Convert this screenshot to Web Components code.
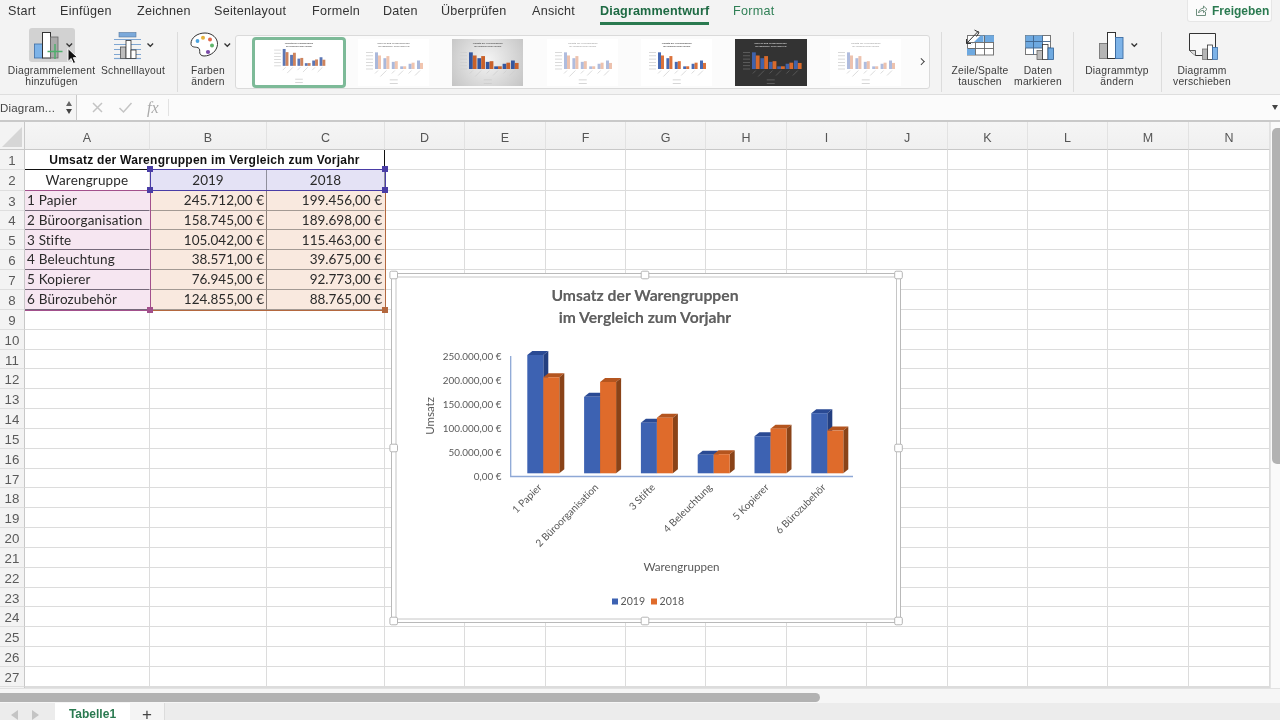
<!DOCTYPE html>
<html lang="de"><head><meta charset="utf-8"><title>Excel</title>
<style>html,body{margin:0;padding:0;width:1280px;height:720px;overflow:hidden;background:#f3f3f3}</style></head>
<body>
<x-app>
  <x-tabs slot="tabs"></x-tabs>
  <x-ribbon slot="ribbon">
    <x-rbtn w="87" ml="8" l1="Diagrammelement" l2="hinzufügen"><svg viewBox="8 26 87 38" width="87" height="38">
      <rect x="29" y="28" width="46" height="34" rx="3" fill="#d2d2d2"/>
      <rect x="34.5" y="44" width="8" height="14" fill="#7db3e8" stroke="#3d6ea5" stroke-width=".8"/>
      <rect x="42.5" y="32.5" width="8" height="25.500" fill="#fff" stroke="#333" stroke-width="1"/>
      <rect x="50.500" y="37" width="7.500" height="21" fill="#aaa" stroke="#666" stroke-width=".8"/>
      <path d="M55 44v15M47.500 51.500h15" stroke="#4fae6c" stroke-width="1.500" fill="none"/>
      <path d="M66.500 43.500l2.800 2.800 2.800-2.800" stroke="#333" stroke-width="1.300" fill="none"/>
    </svg></x-rbtn>
    <x-rbtn w="64" ml="6" l1="Schnelllayout"><svg viewBox="101 26 64 38" width="64" height="38">
      <rect x="119" y="32.500" width="17" height="4.500" fill="#7ba9da" stroke="#55789f" stroke-width=".6"/>
      <path d="M114 39.500h27M114 44.500h27M114 49.500h27M114 54.500h27" stroke="#7ea6d2" stroke-width="1"/>
      <path d="M114 58.500h27" stroke="#7ea6d2" stroke-width="1.200"/>
      <rect x="120.500" y="47" width="5.500" height="11.500" fill="#bdbdbd" stroke="#555" stroke-width=".8"/>
      <rect x="126" y="40.500" width="5" height="18" fill="#fff" stroke="#333" stroke-width=".8"/>
      <rect x="131" y="50" width="5" height="8.500" fill="#fff" stroke="#333" stroke-width=".8"/>
      <path d="M147.500 43.500l2.800 2.800 2.800-2.800" stroke="#333" stroke-width="1.300" fill="none"/>
    </svg></x-rbtn>
    <x-sep ml="12"></x-sep>
    <x-rbtn w="48" ml="6" l1="Farben" l2="ändern"><svg viewBox="184 26 48 38" width="48" height="38">
      <path d="M205 33c-8 0-14 5-14 10.500 0 3.500 3 3.500 5.500 3.800 2.500.3 3.500 1.800 3.200 4.200-.3 2.500 1.300 4.500 4.300 4.500 7 0 13-5 13.500-11.500C217.900 38 212 33 205 33z" fill="#fff" stroke="#333" stroke-width="1"/>
      <circle cx="197.500" cy="41" r="1.900" fill="#4aa3df"/><circle cx="203" cy="37.800" r="2" fill="#e6b23a"/><circle cx="210" cy="39.500" r="2" fill="#e2694b"/><circle cx="212" cy="45.500" r="2" fill="#5fb56b"/><circle cx="208" cy="52" r="2.100" fill="#7a4aa8"/>
      <path d="M224.500 43.500l2.800 2.800 2.800-2.800" stroke="#333" stroke-width="1.300" fill="none"/>
    </svg></x-rbtn>
    <x-gallery ml="3"></x-gallery>
    <x-sep ml="11"></x-sep>
    <x-rbtn w="56" ml="10" l1="Zeile/Spalte" l2="tauschen"><svg viewBox="952 26 56 38" width="56" height="38">
      <rect x="967.500" y="35.500" width="26" height="19.500" fill="#fff" stroke="#777" stroke-width="1"/>
      <path d="M967 55v-7h8v-6h9v-6.500h10v6.500h-10v0h-9v13z" fill="#6ea9e0"/>
      <rect x="984" y="35.500" width="9.500" height="6.500" fill="#6ea9e0"/>
      <rect x="967.500" y="48" width="8" height="7" fill="#6ea9e0"/>
      <path d="M967.500 48.500l7-6.500h9v-6.500h-3" fill="#6ea9e0"/>
      <path d="M967.500 48.500h26M967.500 42.500h26M975.500 42.500v12.500M984.500 35.500v19.500" stroke="#666" stroke-width=".9"/>
      <path d="M966.500 39v4.500h4.500M966.500 43.500l12-12.500M974.500 30l4.500 2.500-2.500 4" stroke="#333" stroke-width="1" fill="none"/>
    </svg></x-rbtn>
    <x-rbtn w="50" ml="5" l1="Daten" l2="markieren"><svg viewBox="1013 26 50 38" width="50" height="38">
      <rect x="1025.500" y="35.500" width="25" height="19" fill="#fff" stroke="#777" stroke-width="1"/>
      <rect x="1025.500" y="35.500" width="17" height="12.500" fill="#6ea9e0"/>
      <path d="M1025.500 41.500h25M1025.500 48h25M1033.500 35.500v19M1042.500 35.500v19" stroke="#3f648c" stroke-width=".9"/>
      <rect x="1037" y="50.500" width="5.500" height="9" fill="#bbb" stroke="#666" stroke-width=".8"/>
      <rect x="1042.500" y="44.500" width="5.500" height="15" fill="#fff" stroke="#333" stroke-width=".8"/>
      <rect x="1048" y="48" width="5.500" height="11.500" fill="#6ea9e0" stroke="#2d5f95" stroke-width=".8"/>
    </svg></x-rbtn>
    <x-sep ml="10"></x-sep>
    <x-rbtn w="76" ml="5" l1="Diagrammtyp" l2="ändern"><svg viewBox="1080 26 76 38" width="76" height="38">
      <rect x="1100.500" y="43.500" width="8" height="15" fill="#b5b5b5" stroke="#777" stroke-width=".9"/>
      <rect x="1108.500" y="32.500" width="8" height="26" fill="#fff" stroke="#333" stroke-width="1"/>
      <rect x="1116.500" y="37.500" width="7.500" height="21" fill="#7db3e8" stroke="#3d6ea5" stroke-width=".9"/>
      <path d="M1132.500 43.500l2.800 2.800 2.800-2.800" stroke="#333" stroke-width="1.300" fill="none"/>
    </svg></x-rbtn>
    <x-sep ml="6"></x-sep>
    <x-rbtn w="70" ml="5" l1="Diagramm" l2="verschieben"><svg viewBox="1168 26 70 38" width="70" height="38">
      <path d="M1190.500 33.500h26v22h-20l-6-5z" fill="#f8f8f8" stroke="#333" stroke-width="1"/>
      <path d="M1190.500 50.500h6v5" fill="#ddd" stroke="#333" stroke-width=".8"/>
      <rect x="1203.500" y="49" width="5" height="10.500" fill="#b5b5b5" stroke="#777" stroke-width=".8"/>
      <rect x="1208.500" y="45" width="5" height="14.500" fill="#fff" stroke="#333" stroke-width=".8"/>
      <rect x="1213.500" y="47.500" width="5" height="12" fill="#7db3e8" stroke="#3d6ea5" stroke-width=".8"/>
    </svg></x-rbtn>
  </x-ribbon>
  <x-formula slot="formula"></x-formula>
  <x-sheet slot="sheet"></x-sheet>
  <x-vscroll slot="vscroll"></x-vscroll>
  <x-hscroll slot="hscroll"></x-hscroll>
  <x-sheettabs slot="sheettabs"></x-sheettabs>
</x-app>
<script>
const UI='"Liberation Sans",Arial,sans-serif', CAL='Lato,"Liberation Sans",sans-serif';
function def(name,html,setup){customElements.define(name,class extends HTMLElement{connectedCallback(){if(this.shadowRoot)return;const r=this.attachShadow({mode:'open'});r.innerHTML=typeof html==='function'?html(this):html;setup&&setup(r,this);}})}

def('x-app',`<style>
:host{display:block;width:1280px;height:720px;position:relative;overflow:hidden;background:#f3f3f3;filter:blur(.4px)}
.row{display:flex;height:566px}
svg{position:absolute;left:66px;top:47px}
</style>
<slot name="tabs"></slot><slot name="ribbon"></slot><slot name="formula"></slot>
<div class="row"><slot name="sheet"></slot><slot name="vscroll"></slot></div>
<slot name="hscroll"></slot><slot name="sheettabs"></slot>
<svg width="14" height="19" viewBox="0 0 14 19"><path d="M2 1.500v13l3.200-3 2.200 5 2.200-1-2.200-4.800h4.300z" fill="#111" stroke="#fff" stroke-width="1"/></svg>`);

def('x-tabs',`<style>
:host{display:flex;height:26px;position:relative;font:12.6px ${UI};color:#333;box-sizing:border-box}
span{position:absolute;top:4px;white-space:nowrap;letter-spacing:.25px}
.on{font-weight:bold;color:#1e6a43;letter-spacing:.15px}
.on::after{content:"";position:absolute;left:0;right:0;top:18px;height:2.500px;background:#2a7a50}
.fm{color:#2f7f55}
.share{position:absolute;left:1187px;top:0;width:85px;height:22px;box-sizing:border-box;background:#fbfbfb;border:1px solid #e6e6e6;border-top:0;border-radius:0 0 3px 3px;display:flex;align-items:center;gap:4px;padding-left:7px;color:#2a7a50;font-weight:bold;font-size:12px}
</style>
<span style="left:8px">Start</span><span style="left:60px">Einfügen</span><span style="left:137px">Zeichnen</span><span style="left:214px">Seitenlayout</span><span style="left:312px">Formeln</span><span style="left:383px">Daten</span><span style="left:441px">Überprüfen</span><span style="left:532px">Ansicht</span><span class="on" style="left:600px">Diagrammentwurf</span><span class="fm" style="left:733px">Format</span>
<div class="share"><svg width="13" height="13" viewBox="0 0 13 13" fill="none" stroke="#6e8f7e" stroke-width="1"><path d="M1.500 5v6.500h9V8"/><path d="M3.500 9c.3-3 2.500-4.800 5-4.800V2l3.500 3.300-3.500 3.300V6.400c-2 0-3.700.8-5 2.600z"/></svg>Freigeben</div>`);

def('x-ribbon',`<style>:host{display:flex;height:69px;box-sizing:border-box;border-bottom:1px solid #dedede;background:#f3f3f3;align-items:flex-start}</style><slot></slot>`);

def('x-rbtn',h=>`<style>
:host{display:flex;flex-direction:column;align-items:center;flex:none;width:${h.getAttribute('w')}px;margin-left:${h.getAttribute('ml')||0}px;font:10.3px/11.2px ${UI};color:#3c3c3c;letter-spacing:.22px;white-space:nowrap}
.i{height:38px;margin-bottom:1px}
</style><div class="i"><slot></slot></div><div>${h.getAttribute('l1')}</div><div>${h.getAttribute('l2')||''}</div>`);

def('x-sep',h=>`<style>:host{display:block;flex:none;width:1px;height:60px;margin-top:6px;margin-left:${h.getAttribute('ml')}px;background:#dcdcdc}</style>`);

def('x-gallery',h=>`<style>
:host{display:flex;flex:none;width:695px;height:54px;box-sizing:border-box;margin:9px 0 0 ${h.getAttribute('ml')}px;background:#fbfbfb;border:1px solid #dadada;border-radius:3px;padding-left:16px;align-items:center;position:relative}
b{position:absolute;left:683px;top:23px;width:3.500px;height:3.500px;border:solid #444;border-width:1.200px 1.200px 0 0;transform:rotate(45deg)}
</style><slot></slot><b></b>`,(r,h)=>{
 const V=[['sel',94,0],['caps',71,12],['grey',71,23],['light',71,23.500],['bold',71,23.500],['dark',72,23],['light',71,22.500]];
 V.forEach(v=>{const t=document.createElement('x-thumb');t.setAttribute('v',v[0]);t.setAttribute('w',v[1]);t.setAttribute('ml',v[2]);h.appendChild(t)});
});

def('x-thumb',h=>{
 const v=h.getAttribute('v'),w=+h.getAttribute('w'),ml=+h.getAttribute('ml');
 const D=[[245,199],[159,190],[105,115],[39,40],[77,93],[125,89]];
 const dark=v==='dark',grey=v==='grey',sel=v==='sel';
 const iw=sel?82:71.500;
 const st={sel:['#4a68ad','#c9764a',.9],caps:['#8ea0cf','#ecb294',.75],grey:['#33569f','#c9612a',1],light:['#9babd6','#e9b39a',.8],bold:['#3d62b0','#d96a30',.95],dark:['#3f62ab','#d96a2c',1]}[v];
 const tc=dark?'#ddd':(v==='light'?'#a0a0a0':(v==='caps'?'#777':'#555'));
 const T1=(v==='caps'||dark)?'UMSATZ DER WARENGRUPPEN':'Umsatz der Warengruppen',T2=(v==='caps'||dark)?'IM VERGLEICH ZUM VORJAHR':'im Vergleich zum Vorjahr';
 const fs=(v==='caps'||dark)?2.200:2.500;
 const bw=(grey||dark)?3.800:3,pitch=sel?7.700:8.400,x0=sel?24:17,base=sel?27:30,f=sel?.072:.068;
 let s='';
 D.forEach((d,i)=>{const x=x0+i*pitch;
  s+=`<rect x="${x}" y="${base-d[0]*f}" width="${bw}" height="${d[0]*f}" fill="${st[0]}" opacity="${st[2]}"/><rect x="${x+bw}" y="${base-d[1]*f}" width="${bw}" height="${d[1]*f}" fill="${st[1]}" opacity="${st[2]}"/>`;
  const L=[3,6,3,5,3,5][i];
  s+=`<path d="M${x+bw} ${base+1.500}l-${L} ${L}" stroke="${dark?'#666':'#ccc'}" stroke-width=".7"/>`;
 });
 for(let i=0;i<6;i++)s+=`<rect x="${x0-9}" y="${base-i*3.300-.4}" width="7" height=".8" fill="${dark?'#666':'#d0d0d0'}"/>`;
 const cx=iw/2;
 s=`<text x="${cx}" y="4.500" text-anchor="middle" font-size="${fs}" font-family="Lato,sans-serif" font-weight="${v==='light'?400:700}" fill="${tc}">${T1}</text><text x="${cx}" y="7.600" text-anchor="middle" font-size="${fs}" font-family="Lato,sans-serif" font-weight="${v==='light'?400:700}" fill="${tc}">${T2}</text>`+s+
   `<rect x="${cx-4}" y="40.500" width="8" height=".8" fill="${dark?'#666':'#ccc'}"/><rect x="${cx-4}" y="44" width="8" height=".8" fill="${dark?'#666':'#ccc'}"/>`;
 const bg=grey?'background:radial-gradient(circle at 50% 45%,#f4f4f4,#c4c4c4)':(dark?'background:#333':'background:#fff');
 return `<style>
 :host{display:block;flex:none;width:${w}px;height:${sel?51:47}px;margin-left:${ml}px;box-sizing:border-box;${sel?'border:3px solid #7dba98;border-radius:4px;padding:0 3px 0 3px;background:#fff;':''}}
 div{${bg};width:100%;height:100%;overflow:hidden}
 svg{display:block}
 </style><div><svg width="${iw}" height="${sel?45:47}" viewBox="0 0 ${iw} 47">${s}</svg></div>`;
});

def('x-formula',`<style>
:host{display:flex;height:27px;box-sizing:border-box;background:#fbfbfb;border-bottom:2px solid #c9c9c9;align-items:center;font:11.5px ${UI};color:#444;position:relative}
.n{width:77px;height:25px;box-sizing:border-box;border-right:1px solid #c9c9c9;display:flex;align-items:center;justify-content:space-between;padding:0 4px 0 0;background:#f5f5f5;letter-spacing:.2px;flex:none}
.a{display:flex;flex-direction:column;gap:3px}
i{display:block;width:0;height:0;border:3.500px solid transparent;border-top:0;border-bottom:5px solid #666}
i.d{border-bottom:0;border-top:5px solid #444}
.x{display:flex;align-items:center;gap:14px;padding-left:14px;width:92px;height:17px;box-sizing:border-box;border-right:1px solid #e2e2e2;flex:none}
.f{font:italic 16px "Liberation Serif",serif;color:#aaa}
.t{margin-left:auto;margin-right:2px;border:3.500px solid transparent;border-bottom:0;border-top:5px solid #444;width:0;height:0}
</style>
<div class="n"><span>Diagram...</span><span class="a"><i></i><i class="d"></i></span></div>
<div class="x"><svg width="13" height="13" viewBox="0 0 13 13" stroke="#c4c4c4" stroke-width="1.500" fill="none"><path d="M2 2l9 9M11 2l-9 9"/></svg><svg width="15" height="13" viewBox="0 0 15 13" stroke="#c4c4c4" stroke-width="1.500" fill="none"><path d="M1.500 7l4 4 8-9"/></svg><span class="f">fx</span></div>
<div class="t"></div>`);

def('x-sheet',`<style>
:host{display:block;position:relative;width:1270px;height:566px;overflow:hidden;background:#fff;flex:none}
#g{display:grid}
.c{box-sizing:border-box;border-right:1px solid #dcdcdc;border-bottom:1px solid #dcdcdc;overflow:visible;white-space:nowrap;font:13.500px ${CAL};font-variant-ligatures:none;color:#2a2a2a;display:flex;align-items:center;padding:0 2px}
.ch{background:linear-gradient(#f5f5f5,#f0f0f0);font:12.5px ${UI};color:#555;justify-content:center;border-bottom:1px solid #c8c8c8;border-right:1px solid #e2e2e2;padding-top:5px}
.rh{background:#f3f3f3;font:13.300px ${UI};color:#5a5a5a;justify-content:center;border-right:1px solid #c8c8c8;border-bottom:1px solid #dedede;padding:2px 0 0}
.cor{background:#f3f3f3;border-right:1px solid #c8c8c8;border-bottom:1px solid #c8c8c8;position:relative}
.cor::after{content:"";position:absolute;right:2px;bottom:2px;border:solid transparent;border-width:0 0 20px 20px;border-bottom-color:#d6d6d6}
.r{justify-content:flex-end}.m{justify-content:center}.w{letter-spacing:.17px}
.o{position:absolute;box-sizing:border-box;pointer-events:none}
.h{position:absolute;width:6px;height:6px}
</style><div id="g"></div>`,(r)=>{
 const xs=[0,25,150,267,385,465,546,626,706,787,867,948,1028,1108,1189,1270];
 const ys=[0,28,47.5,68.5,88.5,108,128,147.5,167.5,188];
 while(ys.length<29)ys.push(ys[ys.length-1]+19.83);
 ys.push(566);
 const g=r.getElementById('g');
 g.style.gridTemplateColumns=xs.slice(1).map((x,i)=>(x-xs[i])+'px').join(' ');
 g.style.gridTemplateRows=ys.slice(1).map((y,i)=>(y-ys[i]).toFixed(2)+'px').join(' ');
 const cols='ABCDEFGHIJKLMN';
 const data={2:['Warengruppe','2019','2018'],3:['1 Papier','245.712,00 €','199.456,00 €'],4:['2 Büroorganisation','158.745,00 €','189.698,00 €'],5:['3 Stifte','105.042,00 €','115.463,00 €'],6:['4 Beleuchtung','38.571,00 €','39.675,00 €'],7:['5 Kopierer','76.945,00 €','92.773,00 €'],8:['6 Bürozubehör','124.855,00 €','88.765,00 €']};
 const add=(cls,txt,st)=>{const d=document.createElement('div');d.className='c '+cls;if(txt)d.textContent=txt;if(st)d.style.cssText=st;g.appendChild(d);return d};
 add('cor');
 [...cols].forEach(c=>add('ch',c));
 for(let y=1;y<=28;y++){
  add('rh',y<28?String(y):'');
  for(let x=0;x<14;x++){
   if(y===1&&x===0){add('m','Umsatz der Warengruppen im Vergleich zum Vorjahr',`grid-column:span 3;font:bold 12px ${UI};color:#111;border-right:1.500px solid #111;letter-spacing:.26px;padding-top:1px`);continue}
   if(y===1&&x<3)continue;
   let cls='',txt='',st='';
   if(data[y]&&x<3){
    txt=data[y][x];
    if(y===2){cls='m';st=x?'background:#e4e2f5;border-right:1px solid #8f8f9c;':'border-bottom:0;letter-spacing:.17px;'}
    else{
     cls=x?'r':'w';
     st='border-bottom:1px solid '+(x?'#a39a94':'#75697a')+';background:'+(x?'#f9e9df':'#f6e6f1')+';';
     st+='border-right:1px solid '+(x==1?'#8c8079':'transparent')+';';
    }
   }
   add(cls,txt,st);
  }
 }
 const ov=(x,y,w,h,css)=>{const d=document.createElement('div');d.className='o';d.style.cssText=`left:${x}px;top:${y-122}px;width:${w}px;height:${h}px;${css}`;r.appendChild(d)};
 const hd=(x,y,col)=>{const d=document.createElement('div');d.className='h';d.style.cssText=`left:${x-3}px;top:${y-122-3}px;background:${col}`;r.appendChild(d)};
 ov(25,169,125,1,'background:#111');
 ov(25,190,126,120.500,'border:solid #a2508c;border-width:1.500px 1.500px 1.500px 0');
 ov(150.5,190,235.500,120.500,'border:solid #b4683f;border-width:0 1.500px 1.500px 0');
 ov(149.5,169,236.500,21.500,'border:1.500px solid #4a3da6');
 hd(150,310,'#a2508c');hd(385,310,'#b4683f');
 [[150,169],[385,169],[150,190],[385,190]].forEach(p=>hd(p[0],p[1],'#4a3da6'));
 r.appendChild(document.createElement('x-chart'));
});

def('x-chart',()=>{
 const D=[['1 Papier',245712,199456],['2 Büroorganisation',158745,189698],['3 Stifte',105042,115463],['4 Beleuchtung',38571,39675],['5 Kopierer',76945,92773],['6 Bürozubehör',124855,88765]];
 const base=473.3,k=.0004815;
 const bar=(x,w,v,f,t,s)=>{const y=base-v*k;return `<path d="M${x} ${y}l5 -4h${w}l-5 4z" fill="${t}"/><path d="M${x+w} ${y}l5 -4V${base-4}l-5 4z" fill="${s}"/><rect x="${x}" y="${y}" width="${w}" height="${v*k}" fill="${f}"/>`};
 let s='';
 D.forEach((d,i)=>{const x=527.3+i*56.8;
  s+=bar(x,16,d[1],'#3d62b2','#2a4a94','#233f80')+bar(x+16,16,d[2],'#df6b2b','#b4551f','#8a4318');
  s+=`<text transform="translate(${x+15} 488) rotate(-45)" text-anchor="end" class="t" font-size="10.100">${d[0]}</text>`;
 });
 ['250.000,00 €','200.000,00 €','150.000,00 €','100.000,00 €','50.000,00 €','0,00 €'].forEach((l,i)=>{s+=`<text x="501.500" y="${360+i*24}" text-anchor="end" class="t" font-size="9.900">${l}</text>`});
 const hs=[[393.7,275],[645,275],[898.5,275],[393.7,448],[898.5,448],[393.7,621],[645,621],[898.5,621]].map(p=>`<rect x="${p[0]-3.800}" y="${p[1]-3.800}" width="7.600" height="7.600" rx="1.500" fill="#fff" stroke="#b5b5b5" stroke-width="1"/>`).join('');
 return `<style>
 :host{display:block;position:absolute;left:385px;top:146px;width:522px;height:484px}
 svg{display:block;overflow:visible}
 text{font-family:${CAL};fill:#595959;font-variant-ligatures:none}
 .ti{font-weight:700;font-size:15.700px;fill:#606060;filter:drop-shadow(.5px .7px .4px rgba(0,0,0,.3))}
 </style>
 <svg width="522" height="360" viewBox="385 268 522 360">
 <rect x="391.500" y="273.500" width="509" height="349" fill="#fff" stroke="#b9b9b9" stroke-width="1"/>
 <rect x="396" y="277" width="500.500" height="342" fill="#fff" stroke="#c6c6c6" stroke-width="1"/>
 <text class="ti" x="645" y="301" text-anchor="middle">Umsatz der Warengruppen</text>
 <text class="ti" x="645" y="323" text-anchor="middle">im Vergleich zum Vorjahr</text>
 <path d="M510.700 356V476.500H853" fill="none" stroke="#8ea8d6" stroke-width="1.300"/>
 ${s}
 <text transform="translate(434 416) rotate(-90)" text-anchor="middle" font-size="11.500">Umsatz</text>
 <text x="681.500" y="571" text-anchor="middle" font-size="11.600">Warengruppen</text>
 <rect x="612" y="598.500" width="6" height="6" fill="#3d62b2"/><text x="620.500" y="605" font-size="10.600">2019</text>
 <rect x="651" y="598.500" width="6" height="6" fill="#df6b2b"/><text x="659.500" y="605" font-size="10.600">2018</text>
 ${hs}
 </svg>`;
});

def('x-vscroll',`<style>:host{display:block;flex:1;background:#fafafa;border-left:1px solid #e4e4e4;box-sizing:border-box;padding:6px 0 0 1px}
div{height:336px;background:#b2b2b2;border-radius:5px 0 0 5px}</style><div></div>`);
def('x-hscroll',`<style>:host{display:block;height:15px;background:#f6f6f6;border-top:1px solid #e2e2e2;box-sizing:border-box;padding-top:4px}
div{width:820px;height:9px;background:#b2b2b2;border-radius:0 5px 5px 0}</style><div></div>`);
def('x-sheettabs',`<style>
:host{display:flex;height:17px;background:#ececec;box-sizing:border-box;font:bold 12px/17px ${UI};color:#2a7a50;align-items:stretch;overflow:hidden}
.n{width:55px;flex:none;display:flex;gap:14px;align-items:center;padding:7px 0 0 11px;box-sizing:border-box}
.n i{width:0;height:0;border:5px solid transparent;display:block}
.l{border-left:0 !important;border-right:7px solid #c4c4c4 !important}.g{border-right:0 !important;border-left:7px solid #c4c4c4 !important}
.t{width:75px;background:#fff;display:flex;justify-content:center;padding-top:3px;box-sizing:border-box;flex:none}
.p{width:35px;background:#f4f4f4;border-right:1px solid #dcdcdc;display:flex;justify-content:center;font:normal 17px/17px ${UI};color:#444;flex:none;padding-top:3px;box-sizing:border-box}
</style><div class="n"><i class="l"></i><i class="g"></i></div><div class="t">Tabelle1</div><div class="p">+</div>`);
</script>
</body></html>
